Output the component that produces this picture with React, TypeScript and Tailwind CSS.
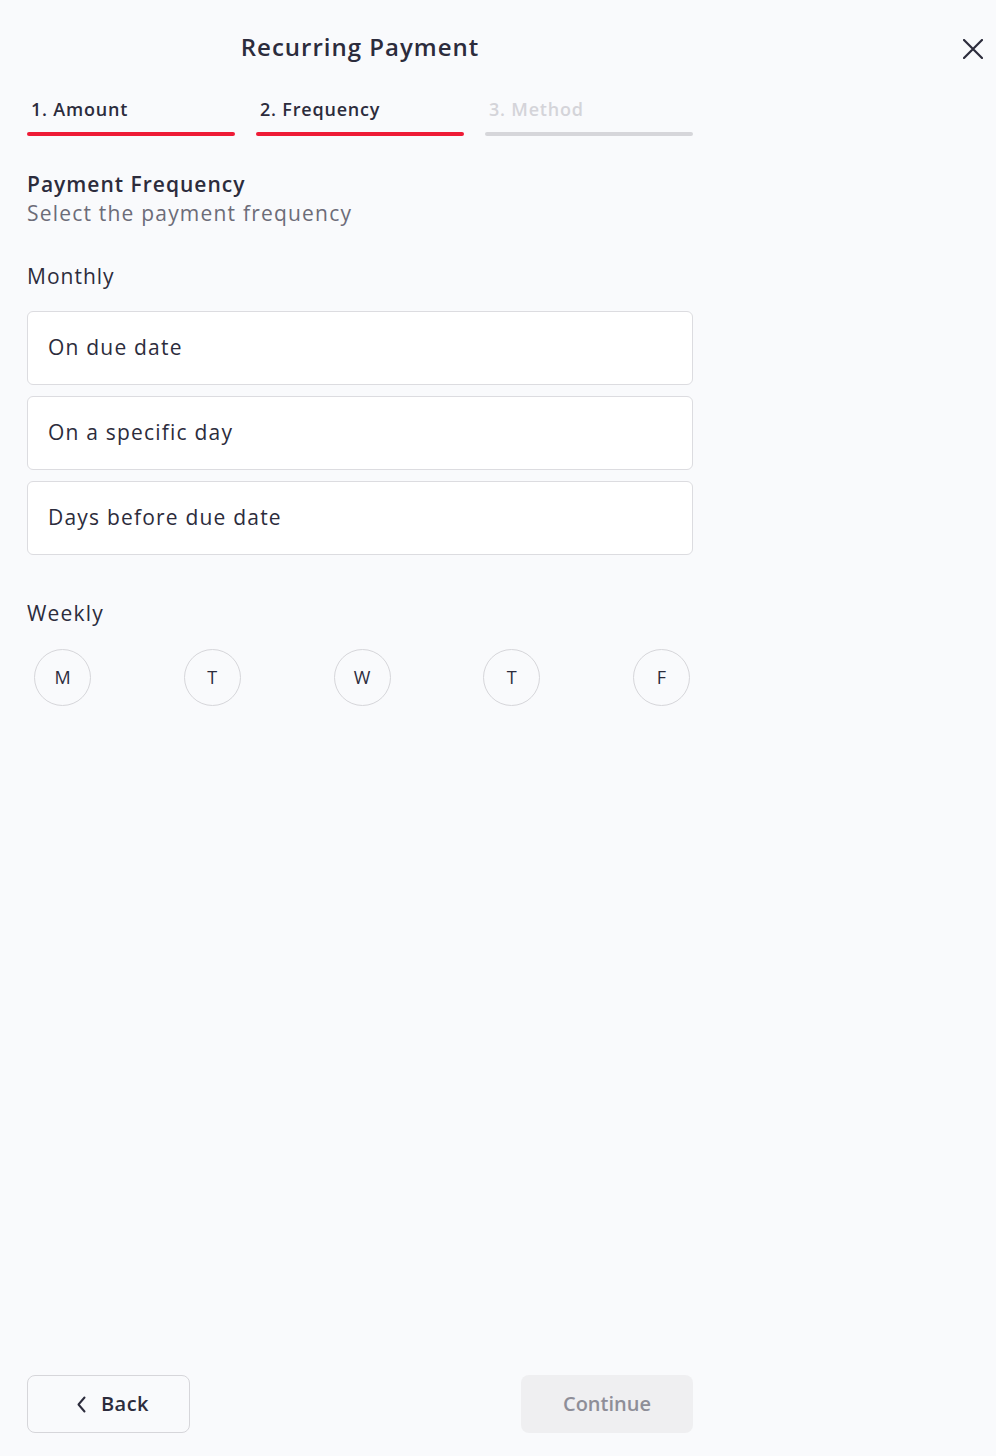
import React, { useState } from 'react';

const steps = [
  { label: '1. Amount', done: true },
  { label: '2. Frequency', done: true },
  { label: '3. Method', done: false },
];

const monthlyOptions = ['On due date', 'On a specific day', 'Days before due date'];
const weekDays = ['M', 'T', 'W', 'T', 'F'];

const App = () => {
  const [selected, setSelected] = useState<string | null>(null);
  const [day, setDay] = useState<number | null>(null);

  return (
    <div
      className="min-h-screen bg-[#f9fafc] flex text-[#2c2c3c]"
      style={{ fontFamily: '"Open Sans", "Noto Sans", sans-serif' }}
    >
      <div className="ml-[27px] w-[666px] flex flex-col min-h-screen">
        {/* Header */}
        <h1 className="pt-[31px] text-center text-[24px] leading-8 font-semibold tracking-[1px]">
          Recurring Payment
        </h1>

        {/* Steps */}
        <div className="mt-8 grid grid-cols-3 gap-[21px]">
          {steps.map((s) => (
            <div key={s.label}>
              <div
                className={`px-[4px] text-[18px] leading-7 font-semibold tracking-[0.8px] ${
                  s.done ? 'text-[#2c2c3c]' : 'text-[#d4d4d9]'
                }`}
              >
                {s.label}
              </div>
              <div
                className={`mt-[9px] h-1 rounded-full ${s.done ? 'bg-[#ee1b36]' : 'bg-[#d6d6da]'}`}
              />
            </div>
          ))}
        </div>

        {/* Section heading */}
        <div className="mt-[34px]">
          <h2 className="text-[21px] leading-7 font-semibold tracking-[1px]">Payment Frequency</h2>
          <p className="mt-px text-[21px] leading-7 tracking-[1.2px] text-[#6c6c78]">
            Select the payment frequency
          </p>
        </div>

        {/* Monthly */}
        <h3 className="mt-[35px] text-[21px] leading-7 tracking-[1px]">Monthly</h3>
        <div className="mt-[21px] flex flex-col gap-[11px]">
          {monthlyOptions.map((opt) => (
            <button
              key={opt}
              onClick={() => setSelected(opt)}
              className={`h-[74px] w-full rounded-md border bg-white px-[20px] text-left text-[21px] tracking-[1.2px] ${
                selected === opt ? 'border-[#ee1b36]' : 'border-[#dcdce0]'
              }`}
            >
              {opt}
            </button>
          ))}
        </div>

        {/* Weekly */}
        <h3 className="mt-[44px] text-[21px] leading-7 tracking-[1.2px]">Weekly</h3>
        <div className="mt-[22px] flex justify-between pl-[7px] pr-[3px]">
          {weekDays.map((d, i) => (
            <button
              key={i}
              onClick={() => setDay(i)}
              className={`flex h-[57px] w-[57px] items-center justify-center rounded-full border text-[18px] ${
                day === i ? 'border-[#ee1b36] bg-[#ee1b36] text-white' : 'border-[#d6d6da] bg-transparent'
              }`}
            >
              {d}
            </button>
          ))}
        </div>

        {/* Footer */}
        <div className="mt-auto flex items-center justify-between pb-[23px]">
          <button className="flex h-[58px] w-[163px] items-center justify-center gap-[15px] rounded-lg border border-[#d6d6da] bg-transparent pl-[9px] text-[20px] font-semibold tracking-[0.5px]">
            <svg width="9" height="17" viewBox="0 0 9 17" fill="none">
              <path d="M7.5 1.5 1.5 8.5l6 7" stroke="#2c2c3c" strokeWidth="2" strokeLinecap="round" strokeLinejoin="round" />
            </svg>
            Back
          </button>
          <button
            disabled
            className="h-[58px] w-[172px] rounded-lg bg-[#efeff1] text-[20px] font-semibold text-[#8e8e98]"
          >
            Continue
          </button>
        </div>
      </div>

      {/* Close */}
      <button className="ml-auto mr-[13px] mt-[39px] h-5 w-5 self-start" aria-label="Close">
        <svg width="20" height="20" viewBox="0 0 20 20" fill="none">
          <path d="M1 1l18 18M19 1 1 19" stroke="#2c2c3c" strokeWidth="2.2" strokeLinecap="round" />
        </svg>
      </button>
    </div>
  );
};

export default App;
